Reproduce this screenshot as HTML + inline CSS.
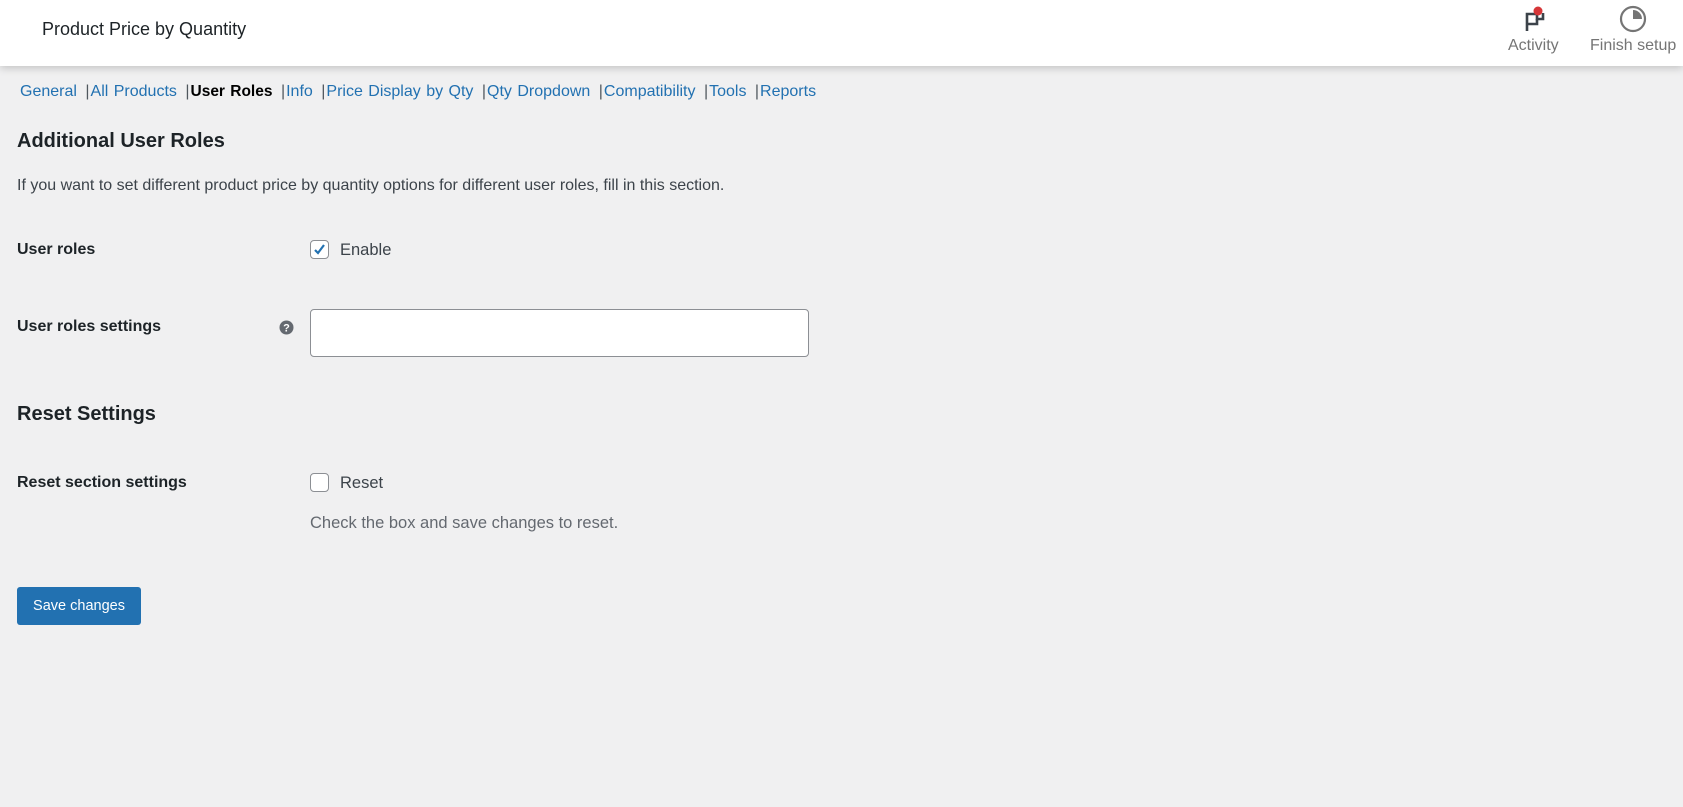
<!DOCTYPE html>
<html><head><style>
body{margin:0;width:1683px;height:807px;background:#f0f0f1;font-family:"Liberation Sans",sans-serif;color:#1d2327;position:relative;overflow:hidden}
.hdr{position:absolute;left:0;top:0;width:1683px;height:66px;background:#fff;box-shadow:0 2px 8px rgba(0,0,0,.2)}
.abs{position:absolute;white-space:nowrap}
.nav{left:20px;top:83px;font-size:16px;color:#2271b1;word-spacing:1px}
.nav b{color:#000;font-weight:bold;font-size:15.5px}
.nav span{color:#50575e;margin:0 1px 0 3px}
.lbl{font-size:16px;font-weight:bold;color:#1d2327}
.cb{position:absolute;width:17px;height:17px;border:1px solid #8c8f94;border-radius:4px;background:#fff}
</style></head><body>
<div class="hdr">
<div class="abs" style="left:42px;top:19px;font-size:18px;color:#1d2327">Product Price by Quantity</div>
<svg class="abs" style="left:1522px;top:3px" width="28" height="30" viewBox="0 0 28 30"><path d="M5 28V11h10v5h6v-6" fill="none" stroke="#3c434a" stroke-width="2.6"/><path d="M5 21h10v-5" fill="none" stroke="#3c434a" stroke-width="2.6"/><circle cx="16" cy="8" r="4.5" fill="#d63638"/></svg>
<div class="abs" style="left:1508px;top:37px;font-size:16px;color:#757575">Activity</div>
<svg class="abs" style="left:1618px;top:4px" width="30" height="30" viewBox="0 0 30 30"><circle cx="15" cy="15" r="12" fill="none" stroke="#757575" stroke-width="2.2"/><path d="M15 6a9 9 0 0 1 9 9h-9z" fill="#757575"/></svg>
<div class="abs" style="left:1590px;top:37px;font-size:16px;color:#757575">Finish setup</div>
</div>
<div class="abs nav">General <span>|</span>All Products <span>|</span><b>User Roles</b> <span>|</span>Info <span>|</span>Price Display by Qty <span>|</span>Qty Dropdown <span>|</span>Compatibility <span>|</span>Tools <span>|</span>Reports</div>
<div class="abs" style="left:17px;top:130px;font-size:20px;font-weight:bold">Additional User Roles</div>
<div class="abs" style="left:17px;top:177px;font-size:16px;color:#3c434a">If you want to set different product price by quantity options for different user roles, fill in this section.</div>
<div class="abs lbl" style="left:17px;top:241px">User roles</div>
<div class="cb" style="left:310px;top:240px"><svg width="17" height="17" viewBox="0 0 17 17"><path d="M4 9l3 3 6-8" fill="none" stroke="#2271b1" stroke-width="2.2"/></svg></div>
<div class="abs" style="left:340px;top:241px;font-size:16.5px;color:#3c434a">Enable</div>
<div class="abs lbl" style="left:17px;top:318px">User roles settings</div>
<svg class="abs" style="left:279px;top:320px" width="15" height="15" viewBox="0 0 15 15"><circle cx="7.5" cy="7.5" r="7" fill="#646970"/><text x="7.5" y="11.5" font-size="11" font-weight="bold" fill="#fff" text-anchor="middle" font-family="Liberation Sans">?</text></svg>
<div class="abs" style="left:310px;top:309px;width:497px;height:46px;background:#fff;border:1px solid #8c8f94;border-radius:4px"></div>
<div class="abs" style="left:17px;top:403px;font-size:20px;font-weight:bold">Reset Settings</div>
<div class="abs lbl" style="left:17px;top:474px">Reset section settings</div>
<div class="cb" style="left:310px;top:473px"></div>
<div class="abs" style="left:340px;top:474px;font-size:16.5px;color:#3c434a">Reset</div>
<div class="abs" style="left:310px;top:514px;font-size:16.5px;color:#646970">Check the box and save changes to reset.</div>
<div class="abs" style="left:17px;top:587px;width:124px;height:38px;background:#2271b1;border-radius:3px;color:#fff;font-size:14.5px;line-height:38px;text-align:center">Save changes</div>
</body></html>
